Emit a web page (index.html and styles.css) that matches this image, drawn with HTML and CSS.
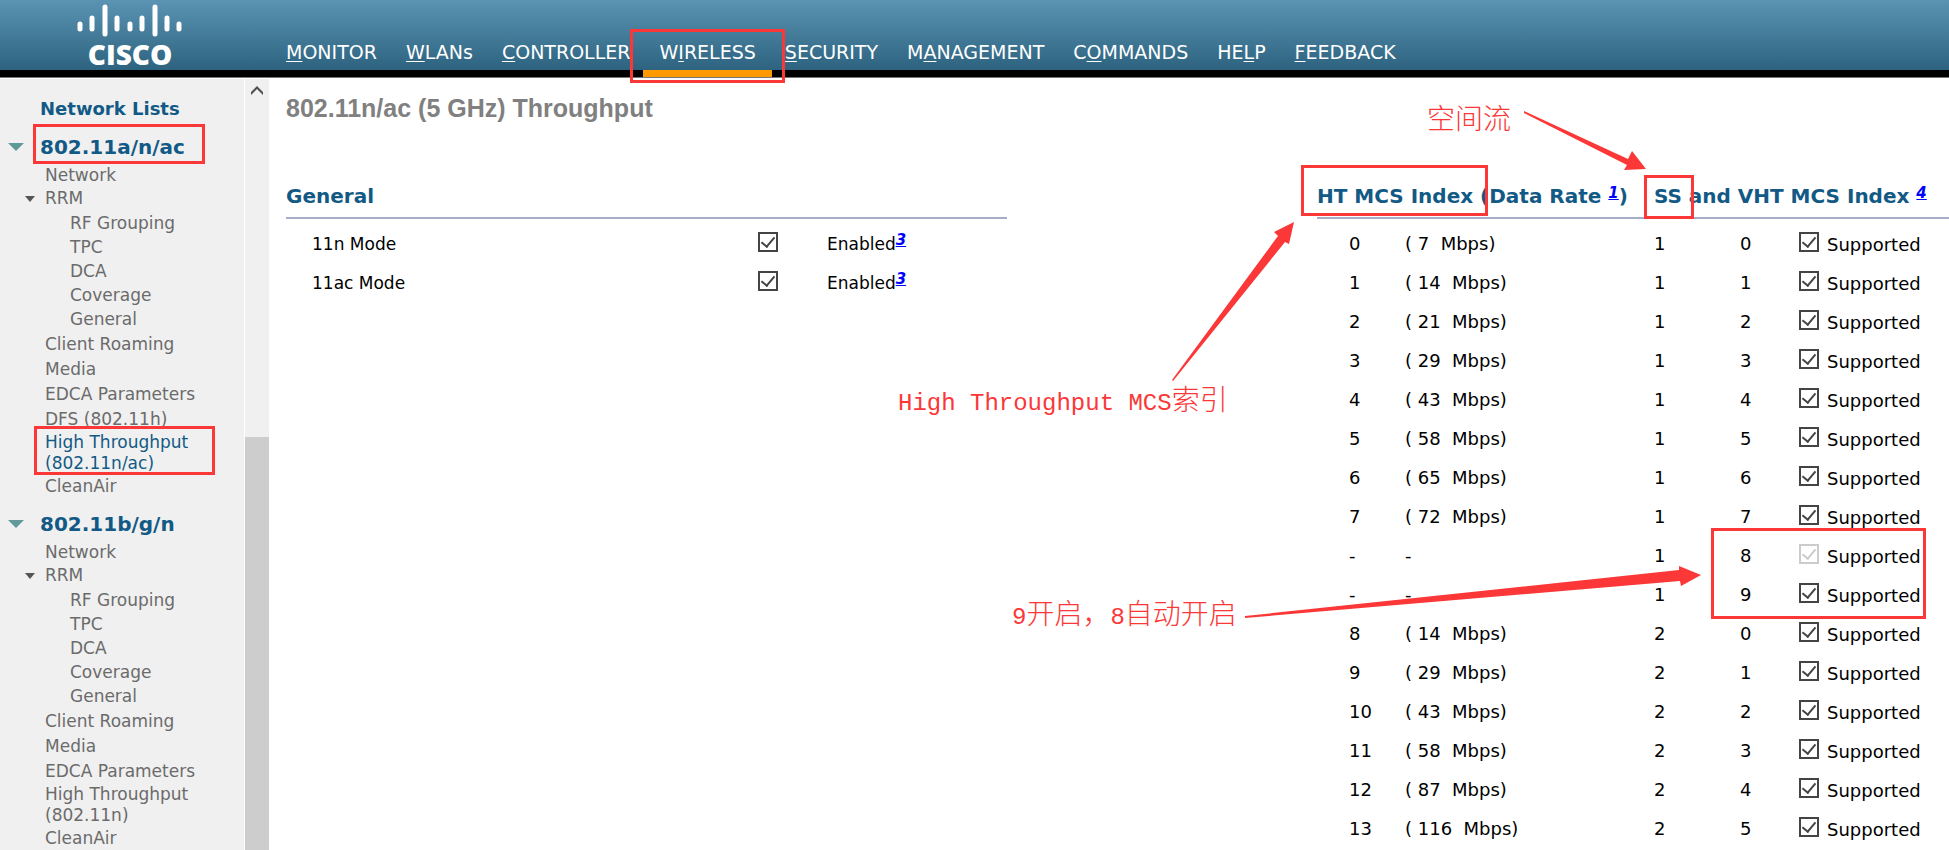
FILE: index.html
```
<!DOCTYPE html>
<html lang="en">

<head>
    <meta charset="UTF-8">
    <meta name="viewport" content="width=device-width, initial-scale=1.0">
    <title>802.11n/ac (5 GHz) Throughput</title>
    <link rel="stylesheet" href="styles.css">
</head>

<body>
    <header class="header">
        <a class="logo" href="#">
            <svg width="106" height="36" viewBox="0 0 106 36" stroke="#fff" stroke-width="5" stroke-linecap="round" aria-hidden="true">
                <path d="M3 21v5M15 15v11M28 4v27M40 15v11M53 21v5M65 15v11M78 4v27M90 15v11M102 21v5"/>
            </svg>
            <span>CISCO</span>
        </a>
        <nav class="menu">
            <a href="#"><u>M</u>ONITOR</a>
            <a href="#"><u>W</u>LANs</a>
            <a href="#"><u>C</u>ONTROLLER</a>
            <a href="#" class="active">W<u>I</u>RELESS<span class="mark mark-menu"></span></a>
            <a href="#"><u>S</u>ECURITY</a>
            <a href="#">M<u>A</u>NAGEMENT</a>
            <a href="#">C<u>O</u>MMANDS</a>
            <a href="#">HE<u>L</u>P</a>
            <a href="#"><u>F</u>EEDBACK</a>
        </nav>
    </header>

    <div class="page">
        <aside class="sidebar">
            <div class="tree">
                <h2>Network Lists</h2>

                <section class="group">
                    <h3><span class="mark mark-group"></span>802.11a/n/ac</h3>
                    <ul>
                        <li><a href="#">Network</a></li>
                        <li class="open"><a href="#">RRM</a>
                            <ul>
                                <li><a href="#">RF Grouping</a></li>
                                <li><a href="#">TPC</a></li>
                                <li><a href="#">DCA</a></li>
                                <li><a href="#">Coverage</a></li>
                                <li><a href="#">General</a></li>
                            </ul>
                        </li>
                        <li><a href="#">Client Roaming</a></li>
                        <li><a href="#">Media</a></li>
                        <li><a href="#">EDCA Parameters</a></li>
                        <li><a href="#">DFS (802.11h)</a></li>
                        <li class="long current"><a href="#">High Throughput<br>(802.11n/ac)</a><span class="mark mark-item"></span></li>
                        <li><a href="#">CleanAir</a></li>
                    </ul>
                </section>

                <section class="group">
                    <h3>802.11b/g/n</h3>
                    <ul>
                        <li><a href="#">Network</a></li>
                        <li class="open"><a href="#">RRM</a>
                            <ul>
                                <li><a href="#">RF Grouping</a></li>
                                <li><a href="#">TPC</a></li>
                                <li><a href="#">DCA</a></li>
                                <li><a href="#">Coverage</a></li>
                                <li><a href="#">General</a></li>
                            </ul>
                        </li>
                        <li><a href="#">Client Roaming</a></li>
                        <li><a href="#">Media</a></li>
                        <li><a href="#">EDCA Parameters</a></li>
                        <li class="long"><a href="#">High Throughput<br>(802.11n)</a></li>
                        <li><a href="#">CleanAir</a></li>
                    </ul>
                </section>
            </div>
            <div class="scrollbar">
                <svg width="12" height="10" viewBox="0 0 12 10" fill="#505050" aria-hidden="true"><path d="M6 0l6 6v3L6 3 0 9V6z"/></svg>
                <div class="thumb"></div>
            </div>
        </aside>

        <main class="content">
            <h1>802.11n/ac (5 GHz) Throughput</h1>

            <div class="panels">
                <section class="general">
                    <h2>General</h2>
                    <table>
                        <tr>
                            <td class="name"><label for="mode-n">11n Mode</label></td>
                            <td class="box"><input type="checkbox" id="mode-n" checked></td>
                            <td>Enabled<sup><a href="#">3</a></sup></td>
                        </tr>
                        <tr>
                            <td class="name"><label for="mode-ac">11ac Mode</label></td>
                            <td class="box"><input type="checkbox" id="mode-ac" checked></td>
                            <td>Enabled<sup><a href="#">3</a></sup></td>
                        </tr>
                    </table>
                </section>

                <section class="rates">
                    <h2>
                        <span>HT MCS Index (Data Rate <sup><a href="#">1</a></sup>)</span>
                        <span>SS and VHT MCS Index <sup><a href="#">4</a></sup></span>
                    </h2>
                    <table>
                        <tbody id="rates"></tbody>
                    </table>

                    <!-- notes over the table -->
                    <span class="mark mark-ht"></span>
                    <span class="mark mark-ss"></span>
                    <span class="mark mark-vht"></span>
                    <svg class="arrows" width="632" height="520" viewBox="0 0 632 520" fill="#fb3737" aria-hidden="true">
                        <path d="M207 -68L311 -20L315 -28L329 -10L307 -9L310 -14L207 -66z"/>
                        <path d="M-145 201L-39 57L-43 53L-23 43L-28 65L-32 63L-144 202z"/>
                        <path d="M-72 437L362 391L362 387L384 396L364 407L363 402L-72 439z"/>
                    </svg>
                    <p class="note note-ss">空间流</p>
                    <p class="note note-ht"><span>High Throughput MCS</span>索引</p>
                    <p class="note note-vht"><span>9</span>开启，<span>8</span>自动开启</p>
                </section>
            </div>
        </main>
    </div>

    <script>
        // HT index, data rate, spatial streams, VHT index
        var rates = [
            ['0', 7, 1, 0],
            ['1', 14, 1, 1],
            ['2', 21, 1, 2],
            ['3', 29, 1, 3],
            ['4', 43, 1, 4],
            ['5', 58, 1, 5],
            ['6', 65, 1, 6],
            ['7', 72, 1, 7],
            ['-', null, 1, 8],
            ['-', null, 1, 9],
            ['8', 14, 2, 0],
            ['9', 29, 2, 1],
            ['10', 43, 2, 2],
            ['11', 58, 2, 3],
            ['12', 87, 2, 4],
            ['13', 116, 2, 5]
        ];

        var html = '';
        rates.forEach(function (row) {
            var id = 'mcs-' + row[2] + '-' + row[3];
            // 8 is switched on together with 9
            var disabled = row[3] === 8 ? ' disabled' : '';
            html += '<tr>' +
                '<td class="ht">' + row[0] + '</td>' +
                '<td class="rate">' + (row[1] ? '( ' + row[1] + '&nbsp; Mbps)' : '-') + '</td>' +
                '<td class="ss">' + row[2] + '</td>' +
                '<td class="vht">' + row[3] + '</td>' +
                '<td class="sup"><input type="checkbox" id="' + id + '" checked' + disabled + '>' +
                '<label for="' + id + '">Supported</label></td>' +
                '</tr>';
        });
        document.getElementById('rates').innerHTML = html;
    </script>
</body>

</html>
```

FILE: styles.css
```
* {
    box-sizing: border-box;
}

body {
    margin: 0;
    height: 100vh;
    display: flex;
    flex-direction: column;
    overflow: hidden;
    background: #fff;
    color: #000;
    font-family: "DejaVu Sans", Verdana, sans-serif;
    font-size: 17px;
}

h1, h2, h3, ul, p {
    margin: 0;
    padding: 0;
}

ul {
    list-style: none;
}

/* header */
.header {
    display: flex;
    height: 78px;
    flex-shrink: 0;
    background: linear-gradient(#5a93b3, #2d637f);
    background-size: 100% 70px;
    background-repeat: no-repeat;
    background-color: #000;
    border-bottom: 1px solid #777;
}

.logo {
    width: 286px;
    padding-left: 77px;
    padding-top: 3px;
    color: #fff;
    text-decoration: none;
}

.logo svg {
    display: block;
}

.logo span {
    display: block;
    width: 106px;
    text-align: center;
    font: 800 28px/30px "Open Sans", sans-serif;
}

.menu {
    display: flex;
    gap: 29px;
    padding-top: 40px;
}

.menu a {
    position: relative;
    color: #fff;
    font-size: 19px;
    line-height: 24px;
    text-decoration: none;
}

.menu u {
    text-underline-offset: 2px;
}

.menu .active::after {
    content: "";
    position: absolute;
    left: -16px;
    right: -16px;
    top: 30px;
    height: 7px;
    background: #ff9900;
}

/* red frames */
.mark {
    position: absolute;
    border: 3px solid #fb3737;
    pointer-events: none;
}

.mark-menu {
    left: -29px;
    right: -29px;
    top: -11px;
    height: 54px;
    z-index: 1;
}

.mark-group {
    left: 33px;
    top: -7px;
    width: 172px;
    height: 40px;
}

.mark-item {
    left: -11px;
    top: -6px;
    width: 181px;
    height: 49px;
}

/* sidebar */
.page {
    display: flex;
    flex: 1;
    min-height: 0;
}

.sidebar {
    display: flex;
    flex-shrink: 0;
    width: 269px;
    margin-top: 1px;
    background: #f0f0f0;
}

.tree {
    flex: 1;
    padding-top: 15px;
}

.tree h2 {
    padding-left: 40px;
    margin-bottom: 7px;
    font-size: 18px;
    line-height: 30px;
    color: #125a85;
}

.group {
    margin-bottom: 10px;
}

.group h3 {
    position: relative;
    padding-left: 40px;
    font-size: 20px;
    line-height: 32px;
    color: #125a85;
}

.group h3::before {
    content: "";
    position: absolute;
    left: 8px;
    top: 12px;
    border: 8px solid transparent;
    border-top-color: #5f9a98;
    border-bottom: 0;
}

.group li {
    position: relative;
    margin-left: 45px;
    line-height: 25px;
}

.group li:first-child,
.group li:last-child {
    line-height: 24px;
}

.group li a {
    color: #6b6b6b;
    text-decoration: none;
}

.group .open {
    line-height: 22px;
}

.group .open::before {
    content: "";
    position: absolute;
    left: -20px;
    top: 9px;
    border: 5px solid transparent;
    border-top: 6px solid #555;
    border-bottom: 0;
}

.group .open ul {
    padding: 2px 0 1px;
}

.group .open li {
    margin-left: 25px;
    line-height: 24px;
}

.group .long {
    line-height: 21px;
}

.group .current a {
    color: #125a85;
}

.scrollbar {
    width: 25px;
    padding-top: 7px;
    border-left: 1px solid #fff;
    display: flex;
    flex-direction: column;
    align-items: center;
}

.thumb {
    flex: 1;
    width: 24px;
    margin-top: 341px;
    background: #cdcdcd;
}

/* content */
.content {
    flex: 1;
    padding: 14px 0 0 17px;
}

h1 {
    font: bold 25px/32px "Liberation Sans", Arial, sans-serif;
    color: #808080;
}

.panels {
    display: flex;
    justify-content: space-between;
    margin-top: 55px;
}

.general {
    width: 721px;
}

.rates {
    position: relative;
    width: 632px;
    font-size: 18px;
}

.panels h2 {
    height: 40px;
    font-size: 20px;
    line-height: 34px;
    color: #125a85;
    border-bottom: 2px solid #a6adc8;
}

.rates h2 {
    display: flex;
    gap: 26px;
    white-space: nowrap;
}

sup {
    font-size: 15px;
    font-weight: bold;
    font-style: italic;
    line-height: 0;
    vertical-align: 5px;
}

sup a {
    color: #00f;
}

table {
    width: 100%;
    margin-top: 5px;
    border-collapse: collapse;
    table-layout: fixed;
}

td {
    height: 39px;
    padding: 0;
    white-space: nowrap;
}

.name {
    width: 472px;
    padding-left: 26px;
}

.box {
    width: 69px;
}

.ht {
    width: 88px;
    padding-left: 32px;
}

.rate {
    width: 249px;
}

.ss {
    width: 86px;
}

.vht {
    width: 59px;
}

input[type="checkbox"] {
    appearance: none;
    width: 20px;
    height: 20px;
    margin: 0;
    border: 2px solid #444;
    background: #fff;
    display: block;
}

.box input[type="checkbox"] {
    margin-bottom: 3px;
}

input[type="checkbox"]:checked::after {
    content: "";
    display: block;
    width: 6px;
    height: 11px;
    margin: 0 auto;
    border: solid #444;
    border-width: 0 2px 2px 0;
    transform: rotate(40deg);
}

input[type="checkbox"]:disabled,
input[type="checkbox"]:disabled::after {
    border-color: #ccc;
}

.sup input[type="checkbox"] {
    display: inline-block;
    vertical-align: -1px;
    margin-right: 8px;
}

/* notes */
.mark-ht {
    left: -16px;
    top: -14px;
    width: 187px;
    height: 51px;
}

.mark-ss {
    left: 327px;
    top: -4px;
    width: 50px;
    height: 44px;
}

.mark-vht {
    left: 394px;
    top: 349px;
    width: 215px;
    height: 91px;
}

.arrows {
    position: absolute;
    left: 0;
    top: 0;
    overflow: visible;
    pointer-events: none;
}

.note {
    position: absolute;
    color: #fb3737;
    font: 300 28px/32px "Noto Sans CJK SC", sans-serif;
    white-space: nowrap;
}

.note span {
    font-family: "Liberation Mono", monospace;
    font-size: 24px;
}

.note-ss {
    left: 110px;
    top: -78px;
}

.note-ht {
    left: -419px;
    top: 203px;
}

.note-vht {
    left: -305px;
    top: 417px;
}
```
